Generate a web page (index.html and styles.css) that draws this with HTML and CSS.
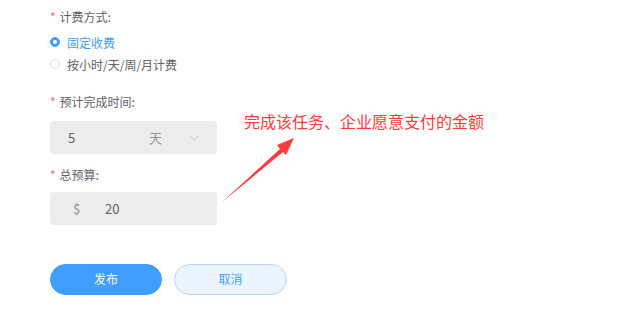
FILE: index.html
```html
<!DOCTYPE html>
<html>
<head>
<meta charset="utf-8">
<link rel="stylesheet" href="styles.css">
</head>
<body>

<div class="form">
  <div class="form-item first">
    <div class="label"><span class="star">*</span>计费方式:</div>
    <div class="radio-group">
      <div class="radio checked"><span class="dot"></span>固定收费</div>
      <div class="radio"><span class="dot"></span>按小时/天/周/月计费</div>
    </div>
  </div>

  <div class="form-item time">
    <div class="label"><span class="star">*</span>预计完成时间:</div>
    <div class="input">
      <span class="value">5</span>
      <span class="unit">天</span>
      <svg class="chevron" width="10" height="6" viewBox="0 0 10 6">
        <path d="M1 1 L5 5 L9 1" fill="none" stroke="#c0c4cc" stroke-width="1"/>
      </svg>
    </div>
  </div>

  <div class="form-item budget">
    <div class="label"><span class="star">*</span>总预算:</div>
    <div class="input">
      <span class="prefix">$</span>
      <span class="value">20</span>
    </div>
  </div>

  <div class="buttons">
    <span class="btn primary">发布</span>
    <span class="btn plain">取消</span>
  </div>
</div>

<!-- annotation over the form -->
<div class="note">完成该任务、企业愿意支付的金额</div>
<svg class="arrow" width="618" height="321" viewBox="0 0 618 321">
  <path d="M221 203 L280 149 L277 145 L294 138 L286 155 L283 152 Z" fill="#ff3b3b"/>
</svg>

</body>
</html>
```

FILE: styles.css
```css
* {
  box-sizing: border-box;
}

body {
  margin: 0;
  background: #ffffff;
  font-family: "Noto Sans CJK SC", "Noto Sans", sans-serif;
  color: #606266;
  font-size: 12px;
}

.form {
  padding: 7px 0 0 50px;
  width: 320px;
}

.label {
  height: 20px;
  line-height: 20px;
  font-size: 12px;
  color: #606266;
}

.star {
  color: #f56c6c;
  margin-right: 4px;
}

/* radios */
.radio-group {
  margin-top: 4px;
}

.radio {
  display: flex;
  align-items: center;
  height: 22px;
  font-size: 12px;
  color: #606266;
}

.radio .dot {
  width: 10px;
  height: 10px;
  border-radius: 50%;
  border: 1px solid #dcdfe6;
  background: #fff;
  margin-right: 7px;
}

.radio.checked {
  color: #409eff;
}

.radio.checked .dot {
  border-color: #409eff;
  background: #409eff;
  position: relative;
}

.radio.checked .dot:after {
  content: "";
  position: absolute;
  left: 2px;
  top: 2px;
  width: 4px;
  height: 4px;
  border-radius: 50%;
  background: #fff;
}

/* inputs */
.form-item.time {
  margin-top: 17px;
}

.form-item.time .input {
  margin-top: 9px;
}

.form-item.budget {
  margin-top: 11px;
}

.form-item.budget .input {
  margin-top: 7px;
}

.input {
  display: flex;
  align-items: center;
  width: 167px;
  height: 33px;
  background: #ececec;
  border-radius: 4px;
  font-size: 13px;
  color: #606266;
}

.time .value {
  margin-left: 18px;
  width: 81px;
}

.unit {
  color: #909399;
  width: 40px;
}

.chevron {
  margin-top: 1px;
}

.prefix {
  margin-left: 23px;
  width: 32px;
  color: #909399;
}

/* buttons */
.buttons {
  display: flex;
  gap: 12px;
  margin-top: 39px;
}

.btn {
  flex-shrink: 0;
  width: 112px;
  height: 31px;
  line-height: 27px;
  border-radius: 16px;
  text-align: center;
  font-size: 12px;
  border: 1px solid #409eff;
}

.btn.primary {
  background: #409eff;
  color: #ffffff;
}

.btn.plain {
  width: 113px;
  background: #ecf5ff;
  border-color: #b3d8ff;
  color: #409eff;
}

/* annotation */
.note {
  position: absolute;
  left: 244px;
  top: 111px;
  font-size: 16px;
  line-height: 20px;
  color: #ff3b3b;
}

.arrow {
  position: absolute;
  left: 0;
  top: 0;
}
```
